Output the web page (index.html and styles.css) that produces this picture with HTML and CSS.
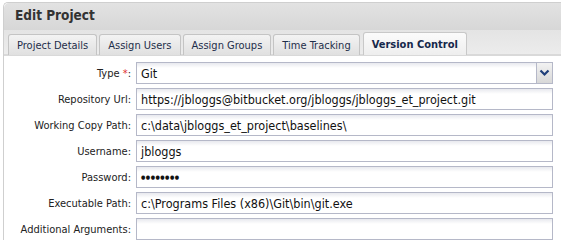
FILE: index.html
```html
<!DOCTYPE html>
<html>
<head>
<meta charset="utf-8">
<link rel="stylesheet" href="styles.css">
</head>
<body>
<div class="panel">
  <div class="header">Edit Project</div>
  <div class="tabstrip">
    <div class="tab">Project Details</div>
    <div class="tab">Assign Users</div>
    <div class="tab">Assign Groups</div>
    <div class="tab">Time Tracking</div>
    <div class="tab active">Version Control</div>
  </div>
  <div class="body">
    <div class="row">
      <label class="lbl">Type <span class="req">*</span>:</label>
      <div class="field combo"><span class="val">Git</span><span class="trigger"><svg width="11" height="8" viewBox="0 0 11 8"><path d="M1.5 1.5 L5.5 5.5 L9.5 1.5" fill="none" stroke="#1f3f7a" stroke-width="2.2"/></svg></span></div>
    </div>
    <div class="row">
      <label class="lbl">Repository Url:</label>
      <div class="field"><span class="val">https://jbloggs@bitbucket.org/jbloggs/jbloggs_et_project.git</span></div>
    </div>
    <div class="row">
      <label class="lbl">Working Copy Path:</label>
      <div class="field"><span class="val">c:\data\jbloggs_et_project\baselines\</span></div>
    </div>
    <div class="row">
      <label class="lbl">Username:</label>
      <div class="field"><span class="val">jbloggs</span></div>
    </div>
    <div class="row">
      <label class="lbl">Password:</label>
      <div class="field"><span class="val pw">●●●●●●●●</span></div>
    </div>
    <div class="row">
      <label class="lbl">Executable Path:</label>
      <div class="field"><span class="val">c:\Programs Files (x86)\Git\bin\git.exe</span></div>
    </div>
    <div class="row">
      <label class="lbl">Additional Arguments:</label>
      <div class="field"><span class="val"></span></div>
    </div>
  </div>
</div>
</body>
</html>
```
FILE: styles.css
```css
html, body {
  margin: 0;
  padding: 0;
  background: #ffffff;
  width: 561px;
  height: 246px;
  overflow: hidden;
}
body {
  padding: 2px 0 0 3px;
  box-sizing: border-box;
  font-family: "DejaVu Sans Condensed", "DejaVu Sans", sans-serif;
}
.panel {
  width: 570px;
  border-left: 1px solid #cfcfcf;
  border-top: 1px solid #cfcfcf;
  border-top-left-radius: 5px;
  background: #ffffff;
}
.header {
  height: 27px;
  box-sizing: border-box;
  padding: 4px 0 0 11px;
  font-size: 13.5px;
  font-weight: bold;
  color: #333333;
  background: linear-gradient(#e2e2e2, #d7d7d7);
  border-top-left-radius: 5px;
}
.tabstrip {
  display: flex;
  align-items: flex-end;
  gap: 2px;
  height: 26px;
  box-sizing: border-box;
  padding-left: 4px;
  background: linear-gradient(#e4e4e4, #ececec);
  border-bottom: 2px solid #d9d9d9;
}
.tab {
  height: 21px;
  box-sizing: border-box;
  padding: 4px 8px 0 8px;
  margin-bottom: -1px;
  font-size: 11px;
  color: #1e2e4a;
  border: 1px solid #c4c4c4;
  border-bottom: none;
  border-radius: 3px 3px 0 0;
  background: linear-gradient(#f3f3f3, #e0e0e0);
  white-space: nowrap;
}
.tab.active {
  height: 23px;
  margin-left: 1px;
  padding: 5px 8px 0 8px;
  font-weight: bold;
  color: #15284b;
  background: linear-gradient(#fbfbfb, #eeeeee);
  border-color: #c8c8c8;
}
.body {
  padding: 6px 0 0 0;
  display: flex;
  flex-direction: column;
  gap: 4px;
}
.row {
  display: flex;
  align-items: center;
  height: 22px;
}
.lbl {
  width: 127px;
  text-align: right;
  font-size: 11px;
  color: #222222;
  padding-right: 5px;
  white-space: nowrap;
}
.req {
  color: #e03030;
}
.field {
  width: 417px;
  height: 22px;
  box-sizing: border-box;
  border: 1px solid #b5b8c8;
  background: linear-gradient(#e8e9ee 0px, #ffffff 5px, #ffffff);
  display: flex;
  align-items: center;
  padding-left: 4px;
  position: relative;
}
.val {
  font-size: 12.5px;
  color: #111111;
  white-space: nowrap;
}
.val.pw {
  font-size: 5.5px;
  letter-spacing: 0.5px;
}
.combo .trigger {
  position: absolute;
  right: -1px;
  top: -1px;
  width: 17px;
  height: 22px;
  box-sizing: border-box;
  border: 1px solid #b5b8c8;
  background: linear-gradient(#f2f2f2, #d8d8d8);
  display: flex;
  align-items: center;
  justify-content: center;
}
```
